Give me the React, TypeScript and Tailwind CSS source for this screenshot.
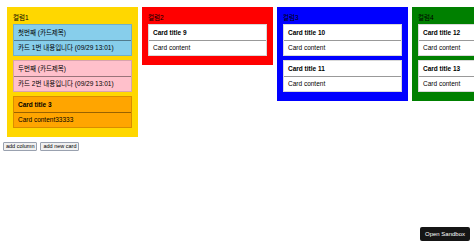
const columns = [
  {
    title: "컬럼1",
    bg: "bg-[#ffd700]",
    cards: [
      { title: "첫번째 (카드제목)", content: "카드 1번 내용입니다 (09/29 13:01)", bg: "bg-[#87ceeb]", bold: false },
      { title: "두번째 (카드제목)", content: "카드 2번 내용입니다 (09/29 13:01)", bg: "bg-[#ffc0cb]", bold: false },
      { title: "Card title 3", content: "Card content33333", bg: "bg-[#ffa500]", bold: true },
    ],
  },
  {
    title: "컬럼2",
    bg: "bg-[#ff0000]",
    cards: [{ title: "Card title 9", content: "Card content", bg: "bg-white", bold: true }],
  },
  {
    title: "컬럼3",
    bg: "bg-[#0000ff]",
    cards: [
      { title: "Card title 10", content: "Card content", bg: "bg-white", bold: true },
      { title: "Card title 11", content: "Card content", bg: "bg-white", bold: true },
    ],
  },
  {
    title: "컬럼4",
    bg: "bg-[#008000]",
    cards: [
      { title: "Card title 12", content: "Card content", bg: "bg-white", bold: true },
      { title: "Card title 13", content: "Card content", bg: "bg-white", bold: true },
    ],
  },
];

export default function App() {
  return (
    <div className="relative w-[474px] h-[248px] overflow-hidden bg-white font-['Liberation_Sans','Noto_Sans_CJK_KR',sans-serif] text-black">
      {/* board */}
      <div className="flex items-start gap-1 pl-[7px] pt-[7px]">
        {columns.map((col) => (
          <div key={col.title} className={`${col.bg} w-[131px] shrink-0 px-[6px] pt-[5px] pb-[5px]`}>
            <div className="text-[6.5px] leading-[12px] h-[12px]">{col.title}</div>
            {col.cards.map((card) => (
              <div key={card.title} className={`${card.bg} mb-1 border border-black/15`}>
                <div
                  className={`h-[16px] flex items-center px-[4px] text-[6.5px] border-b border-black/40 ${
                    card.bold ? "font-bold" : ""
                  }`}
                >
                  {card.title}
                </div>
                <div className="h-[14px] flex items-center px-[4px] text-[6.5px]">{card.content}</div>
              </div>
            ))}
          </div>
        ))}
      </div>

      {/* controls */}
      <div className="flex gap-[3px] pl-[3px] mt-[5px]">
        <button className="h-[9px] px-[2px] text-[5.5px] leading-none border border-gray-400 rounded-[1px] bg-[#f0f0f0]">
          add column
        </button>
        <button className="h-[9px] px-[2px] text-[5.5px] leading-none border border-gray-400 rounded-[1px] bg-[#f0f0f0]">
          add new card
        </button>
      </div>

      <div className="absolute right-[4px] bottom-[7px] h-[14px] px-[5px] flex items-center rounded-[2px] bg-[#151515] text-white text-[6px]">
        Open Sandbox
      </div>
    </div>
  );
}
